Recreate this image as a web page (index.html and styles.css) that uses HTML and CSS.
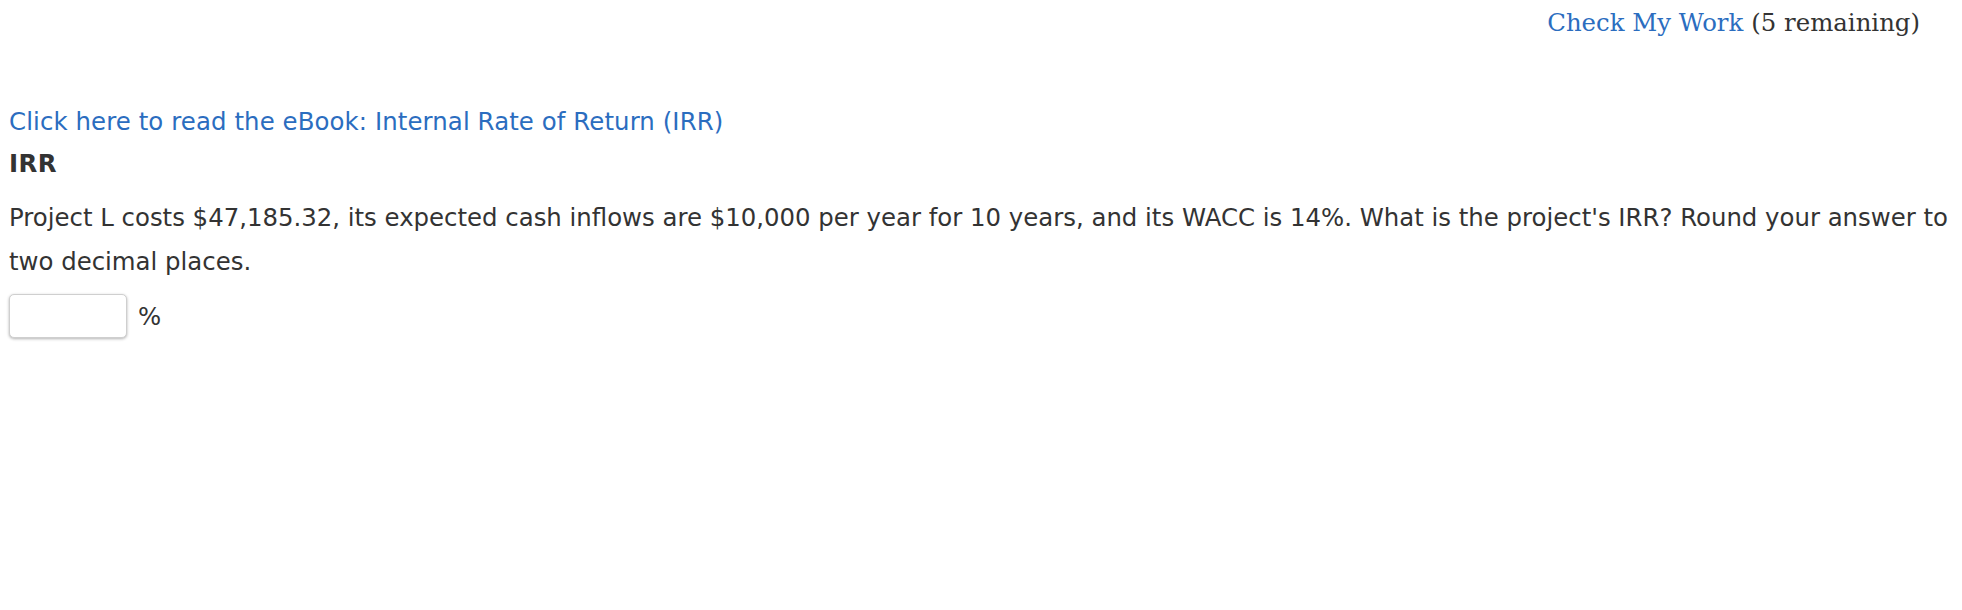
FILE: index.html
```html
<!DOCTYPE html>
<html>
<head>
<meta charset="utf-8">
<link rel="stylesheet" href="styles.css">
</head>
<body>
<div class="page">
  <div class="topbar">
    <a class="check" href="#">Check My Work</a> <span class="remaining">(5 remaining)</span>
  </div>
  <div class="content">
    <a class="ebook" href="#">Click here to read the eBook: Internal Rate of Return (IRR)</a>
    <h2 class="title">IRR</h2>
    <p class="question">Project L costs $47,185.32, its expected cash inflows are $10,000 per year for 10 years, and its WACC is 14%. What is the project's IRR? Round your answer to two decimal places.</p>
    <div class="answer">
      <input class="field" type="text">
      <span class="unit">%</span>
    </div>
  </div>
</div>
</body>
</html>
```
FILE: styles.css
```css
html, body {
  margin: 0;
  padding: 0;
  background: #fff;
}
.page {
  width: 1962px;
  height: 610px;
  font-family: "DejaVu Sans", Verdana, sans-serif;
  color: #333;
}
.topbar {
  display: flex;
  justify-content: flex-end;
  align-items: baseline;
  gap: 8px;
  padding: 5px 42px 0 0;
  font-family: "DejaVu Serif", Georgia, serif;
  font-size: 24.4px;
  line-height: 36px;
}
.check {
  color: #2b6dbf;
  text-decoration: none;
}
.remaining {
  color: #333;
}
.content {
  padding: 60px 6px 0 9px;
  font-size: 24.4px;
}
.ebook {
  display: block;
  color: #2b6dbf;
  text-decoration: none;
  line-height: 42px;
  letter-spacing: 0.1px;
}
.title {
  margin: 0;
  font-size: 24.4px;
  font-weight: bold;
  line-height: 42px;
  letter-spacing: 0.5px;
}
.question {
  margin: 11px 0 0;
  line-height: 44px;
}
.answer {
  display: flex;
  align-items: center;
  gap: 11px;
  margin-top: 10px;
}
.field {
  width: 118px;
  height: 44px;
  box-sizing: border-box;
  border: 1px solid #cfcfcf;
  border-radius: 5px;
  box-shadow: 0 1px 3px rgba(0,0,0,0.3);
  margin: 0;
  padding: 0;
}
.unit {
  font-size: 24.4px;
}
```
